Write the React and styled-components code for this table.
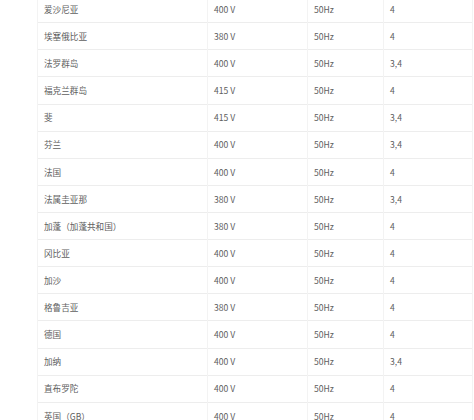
import React from "react";
import styled, { createGlobalStyle } from "styled-components";

const rows = [
  ["爱沙尼亚", "400 V", "50Hz", "4"],
  ["埃塞俄比亚", "380 V", "50Hz", "4"],
  ["法罗群岛", "400 V", "50Hz", "3,4"],
  ["福克兰群岛", "415 V", "50Hz", "4"],
  ["斐", "415 V", "50Hz", "3,4"],
  ["芬兰", "400 V", "50Hz", "3,4"],
  ["法国", "400 V", "50Hz", "4"],
  ["法属圭亚那", "380 V", "50Hz", "3,4"],
  ["加蓬（加蓬共和国）", "380 V", "50Hz", "4"],
  ["冈比亚", "400 V", "50Hz", "4"],
  ["加沙", "400 V", "50Hz", "4"],
  ["格鲁吉亚", "380 V", "50Hz", "4"],
  ["德国", "400 V", "50Hz", "4"],
  ["加纳", "400 V", "50Hz", "3,4"],
  ["直布罗陀", "400 V", "50Hz", "4"],
  ["英国（GB）", "400 V", "50Hz", "4"],
];

const widths = [170, 100, 76, 89];

const GlobalStyle = createGlobalStyle`
  html, body {
    margin: 0;
    padding: 0;
    background: #ffffff;
    overflow: hidden;
  }
`;

const Page = styled.div`
  width: 474px;
  height: 420px;
  overflow: hidden;
  padding-left: 37px;
  box-sizing: border-box;
`;

const Table = styled.table`
  margin-top: -4.4px;
  border-collapse: collapse;
  table-layout: fixed;
  width: 435px;
  font-family: "Noto Sans CJK SC", "Noto Sans", sans-serif;
  font-size: 8.6px;
  color: #606060;
`;

const Row = styled.tr`
  height: 27.11px;
  border-bottom: 1px solid #ededed;
`;

const Cell = styled.td`
  padding: 0 0 0 6px;
  border-left: 1px solid #f3f3f3;
  border-right: 1px solid #f3f3f3;
  vertical-align: middle;
  white-space: nowrap;
  line-height: 1;
`;

const App = () => (
  <>
    <GlobalStyle />
    <Page>
      <Table>
        <colgroup>
          {widths.map((w, i) => (
            <col key={i} style={{ width: w }} />
          ))}
        </colgroup>
        <tbody>
          {rows.map((r) => (
            <Row key={r[0]}>
              {r.map((c, i) => (
                <Cell key={i}>{c}</Cell>
              ))}
            </Row>
          ))}
        </tbody>
      </Table>
    </Page>
  </>
);

export default App;
